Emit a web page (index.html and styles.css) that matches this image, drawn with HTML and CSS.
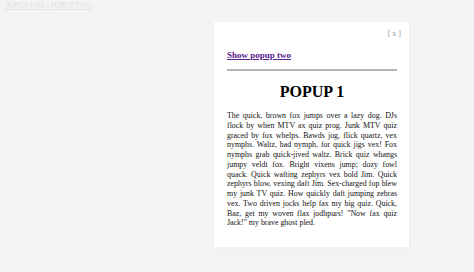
FILE: index.html
```html
<!DOCTYPE html>
<html lang="en">

<head>
    <meta charset="UTF-8">
    <meta name="viewport" content="width=device-width, initial-scale=1.0">
    <title>Popup</title>
    <link rel="stylesheet" href="styles.css">
</head>

<body>
    <div class="top-links">
        <a href="#">POPUP ONE</a> | <a href="#">POPUP TWO</a>
    </div>

    <div class="popup" id="popup1">
        <div class="close"><a href="#">[ x ]</a></div>
        <div class="switch"><a href="#">Show popup two</a></div>
        <hr>
        <h1>POPUP 1</h1>
        <p>The quick, brown fox jumps over a lazy dog. DJs flock by when MTV ax quiz prog. Junk MTV quiz graced by fox whelps. Bawds jog, flick quartz, vex nymphs. Waltz, bad nymph, for quick jigs vex! Fox nymphs grab quick-jived waltz. Brick quiz whangs jumpy veldt fox. Bright vixens jump; dozy fowl quack. Quick wafting zephyrs vex bold Jim. Quick zephyrs blow, vexing daft Jim. Sex-charged fop blew my junk TV quiz. How quickly daft jumping zebras vex. Two driven jocks help fax my big quiz. Quick, Baz, get my woven flax jodhpurs! "Now fax quiz Jack!" my brave ghost pled.</p>
    </div>
</body>

</html>
```

FILE: styles.css
```css
body {
    font-family: "Liberation Serif", "Times New Roman", serif;
    background-color: #f3f3f3;
    margin: 0;
    padding: 0;
}

.top-links {
    font-size: 7.5px;
    line-height: 10px;
    padding: 1px 5px;
    color: #e2e2e2;
}

.top-links a {
    color: #e2e2e2;
}

.popup {
    position: absolute;
    left: 214px;
    top: 22px;
    width: 170px;
    height: 211px;
    padding: 7px 12px 7px 13px;
    background-color: #fff;
    box-shadow: 1px 0 3px rgba(0, 0, 0, 0.04);
}

.close {
    text-align: right;
    font-size: 8px;
    line-height: 10px;
    margin-right: -4px;
}

.close a {
    color: #999;
    text-decoration: none;
}

.switch {
    margin-top: 11px;
    font-size: 9px;
    line-height: 11px;
    font-weight: bold;
}

.switch a {
    color: #551a8b;
}

hr {
    margin: 8px 0 0;
    border: none;
    height: 2px;
    background-color: #b3b3b3;
}

h1 {
    margin: 11px 0 0;
    font-size: 16px;
    line-height: 20px;
    text-align: center;
}

p {
    margin: 9px 0 0;
    font-size: 7.9px;
    line-height: 9.75px;
    text-align: justify;
    color: #111;
}
```
